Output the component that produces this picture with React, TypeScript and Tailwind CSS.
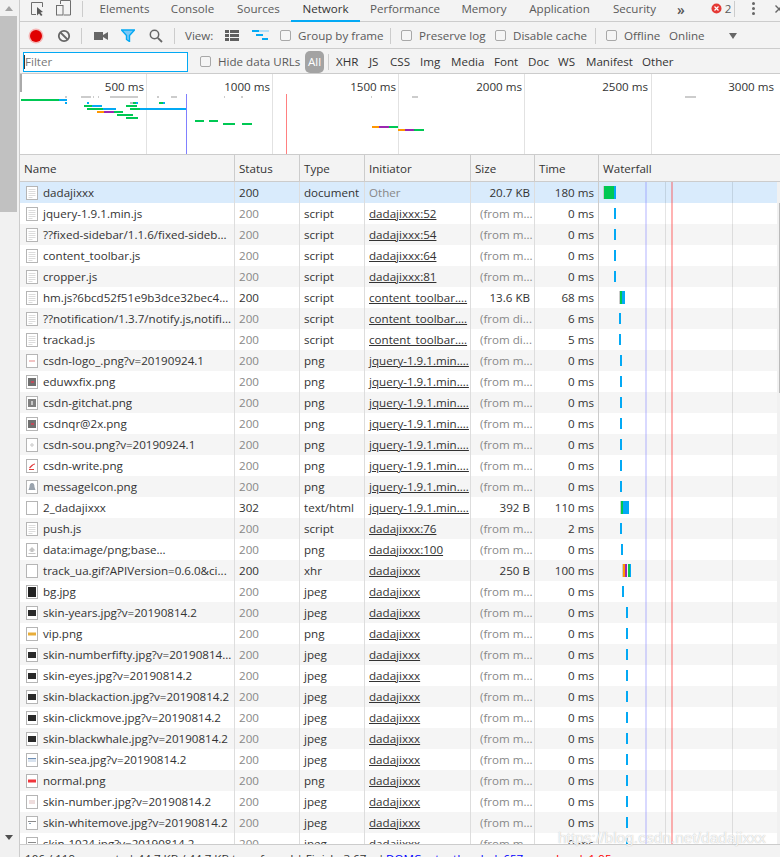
import React from "react";

type Seg = [number, number, string];
type Row = {
  name: string;
  status?: string;
  type: string;
  init: string;
  size?: string;
  time: string;
  icon: string;
  live?: boolean;
  bars: Seg[];
  tall?: boolean;
};

const BLUE = "#03a9f4";
const GREEN = "#00c853";
const JQ = "jquery-1.9.1.min....";
const CT = "content_toolbar....";
const CACHE = "(from m...";

const blue = (x: number): Seg[] => [[x, 2, BLUE]];

const rows: Row[] = [
  { name: "dadajixxx", type: "document", init: "Other", size: "20.7 KB", time: "180 ms", icon: "doc", live: true, tall: true, bars: [[603, 1, "#ccc"], [604, 9.5, GREEN], [613.5, 2.5, BLUE]] },
  { name: "jquery-1.9.1.min.js", type: "script", init: "dadajixxx:52", time: "0 ms", icon: "doc", bars: blue(614) },
  { name: "??fixed-sidebar/1.1.6/fixed-sideb...", type: "script", init: "dadajixxx:54", time: "0 ms", icon: "doc", bars: blue(614) },
  { name: "content_toolbar.js", type: "script", init: "dadajixxx:64", time: "0 ms", icon: "doc", bars: blue(614) },
  { name: "cropper.js", type: "script", init: "dadajixxx:81", time: "0 ms", icon: "doc", bars: blue(614) },
  { name: "hm.js?6bcd52f51e9b3dce32bec4...", type: "script", init: CT, size: "13.6 KB", time: "68 ms", icon: "doc", live: true, tall: true, bars: [[619, 1, "#ccc"], [620, 2, GREEN], [622, 3, BLUE]] },
  { name: "??notification/1.3.7/notify.js,notifi...", type: "script", init: CT, size: "(from di...", time: "6 ms", icon: "doc", bars: blue(619) },
  { name: "trackad.js", type: "script", init: CT, size: "(from di...", time: "5 ms", icon: "doc", bars: blue(619) },
  { name: "csdn-logo_.png?v=20190924.1", type: "png", init: JQ, time: "0 ms", icon: "logo", bars: blue(620) },
  { name: "eduwxfix.png", type: "png", init: JQ, time: "0 ms", icon: "qr", bars: blue(620) },
  { name: "csdn-gitchat.png", type: "png", init: JQ, time: "0 ms", icon: "qrg", bars: blue(620) },
  { name: "csdnqr@2x.png", type: "png", init: JQ, time: "0 ms", icon: "qr", bars: blue(620) },
  { name: "csdn-sou.png?v=20190924.1", type: "png", init: JQ, time: "0 ms", icon: "sou", bars: blue(620) },
  { name: "csdn-write.png", type: "png", init: JQ, time: "0 ms", icon: "write", bars: blue(620) },
  { name: "messageIcon.png", type: "png", init: JQ, time: "0 ms", icon: "bell", bars: blue(620) },
  { name: "2_dadajixxx", status: "302", type: "text/html", init: JQ, size: "392 B", time: "110 ms", icon: "blank", live: true, tall: true, bars: [[620, 1, "#ccc"], [621, 2, GREEN], [623, 6, BLUE]] },
  { name: "push.js", type: "script", init: "dadajixxx:76", time: "2 ms", icon: "doc", bars: blue(620) },
  { name: "data:image/png;base...", type: "png", init: "dadajixxx:100", time: "0 ms", icon: "up", bars: blue(621) },
  { name: "track_ua.gif?APIVersion=0.6.0&ci...", type: "xhr", init: "dadajixxx", size: "250 B", time: "100 ms", icon: "blank", live: true, tall: true, bars: [[622, 1, "#ccc"], [623, 2, "#ff9800"], [625, 2, "#9c27b0"], [628, 2, GREEN], [630, 1, BLUE]] },
  { name: "bg.jpg", type: "jpeg", init: "dadajixxx", time: "0 ms", icon: "dark", bars: blue(622) },
  { name: "skin-years.jpg?v=20190814.2", type: "jpeg", init: "dadajixxx", time: "0 ms", icon: "band", bars: blue(626) },
  { name: "vip.png", type: "png", init: "dadajixxx", time: "0 ms", icon: "vip", bars: blue(626) },
  { name: "skin-numberfifty.jpg?v=20190814...", type: "jpeg", init: "dadajixxx", time: "0 ms", icon: "band", bars: blue(626) },
  { name: "skin-eyes.jpg?v=20190814.2", type: "jpeg", init: "dadajixxx", time: "0 ms", icon: "band", bars: blue(626) },
  { name: "skin-blackaction.jpg?v=20190814.2", type: "jpeg", init: "dadajixxx", time: "0 ms", icon: "band", bars: blue(626) },
  { name: "skin-clickmove.jpg?v=20190814.2", type: "jpeg", init: "dadajixxx", time: "0 ms", icon: "band", bars: blue(626) },
  { name: "skin-blackwhale.jpg?v=20190814.2", type: "jpeg", init: "dadajixxx", time: "0 ms", icon: "band", bars: blue(626) },
  { name: "skin-sea.jpg?v=20190814.2", type: "jpeg", init: "dadajixxx", time: "0 ms", icon: "sea", bars: blue(626) },
  { name: "normal.png", type: "png", init: "dadajixxx", time: "0 ms", icon: "red", bars: blue(626) },
  { name: "skin-number.jpg?v=20190814.2", type: "jpeg", init: "dadajixxx", time: "0 ms", icon: "pale", bars: blue(626) },
  { name: "skin-whitemove.jpg?v=20190814.2", type: "jpeg", init: "dadajixxx", time: "0 ms", icon: "white", bars: blue(626) },
  { name: "skin-1024.jpg?v=20190814.2", type: "jpeg", init: "dadajixxx", time: "0 ms", icon: "white", bars: blue(626) },
];

function FileIcon({ kind }: { kind: string }) {
  return (
    <svg width="12" height="14" viewBox="0 0 12 14" className="shrink-0">
      <rect x="0.5" y="0.5" width="11" height="13" fill="#fff" stroke="#b5b5b5" />
      {kind === "doc" &&
        [3, 5, 7, 9, 11].map((y) => <rect key={y} x="2.5" y={y} width={y === 11 ? 4 : 7} height="1" fill="#dcdcdc" />)}
      {kind === "logo" && <rect x="3" y="6.5" width="6" height="1" fill="#e58a8a" />}
      {kind === "qr" && (
        <>
          <rect x="2" y="3" width="8" height="8" fill="#707070" />
          <rect x="5" y="6" width="3" height="2" fill="#c24a5a" />
        </>
      )}
      {kind === "qrg" && (
        <>
          <rect x="2" y="3" width="8" height="8" fill="#808080" />
          <rect x="5" y="5" width="2" height="4" fill="#c8c8c8" />
        </>
      )}
      {kind === "sou" && <circle cx="6" cy="7" r="1.2" fill="none" stroke="#c4c4c4" />}
      {kind === "write" && <path d="M3 10.5H8M3.5 9L6 6.5Q7.5 5 9 5" fill="none" stroke="#e23b3b" strokeWidth="1.2" />}
      {kind === "bell" && <path d="M6 3 Q8.5 3 8.5 7 L9.5 10 L2.5 10 L3.5 7 Q3.5 3 6 3 Z" fill="#9aa3ad" />}
      {kind === "up" && <path d="M6 4 L9.5 7.5 L7.5 7.5 L7.5 9 L4.5 9 L4.5 7.5 L2.5 7.5 Z M2.5 10 H9.5 V11 H2.5 Z" fill="#c4c4c4" />}
      {kind === "dark" && <rect x="2" y="2" width="8" height="10" fill="#222" />}
      {kind === "band" && <rect x="2" y="4" width="8" height="6" fill="#2a2a2a" />}
      {kind === "vip" && <rect x="2" y="5.5" width="8" height="3" fill="#e8ad3a" />}
      {kind === "sea" && (
        <>
          <rect x="2" y="5" width="8" height="1" fill="#6f8fb5" />
          <rect x="2" y="6" width="8" height="3" fill="#d8e2ee" />
        </>
      )}
      {kind === "red" && <rect x="2" y="5.5" width="8" height="3" fill="#f0353b" />}
      {kind === "pale" && <rect x="3" y="5" width="6" height="4" fill="#eedddd" />}
      {kind === "white" && (
        <>
          <rect x="2" y="5" width="8" height="1" fill="#8a8a8a" />
          <rect x="3" y="7" width="2" height="1" fill="#8aa0b5" />
        </>
      )}
    </svg>
  );
}

function Check({ label, w, low }: { label: string; w: string; low?: boolean }) {
  return (
    <div className={`flex items-center ${w}`}>
      <span className="w-[11px] h-[11px] rounded-[2px] border border-[#a8a8a8] bg-[#f5f5f5] shrink-0" />
      <span className={`ml-[7px] text-[#5a5a5a] whitespace-nowrap ${low ? "pt-px" : ""}`}>{label}</span>
    </div>
  );
}

const tabs: [string, string][] = [
  ["Elements", "w-[69px]"],
  ["Console", "w-[67px]"],
  ["Sources", "w-[65px]"],
  ["Network", "w-[69px]"],
  ["Performance", "w-[90px]"],
  ["Memory", "w-[68px]"],
  ["Application", "w-[83px]"],
  ["Security", "w-[67px]"],
];

const types: [string, string][] = [
  ["XHR", "w-[33px]"],
  ["JS", "w-[21px]"],
  ["CSS", "w-[30px]"],
  ["Img", "w-[31px]"],
  ["Media", "w-[43px]"],
  ["Font", "w-[34px]"],
  ["Doc", "w-[30px]"],
  ["WS", "w-[28px]"],
  ["Manifest", "w-[56px]"],
  ["Other", "w-[40px]"],
];

function Overview() {
  const bars: [number, number, number, string][] = [
    [21, 99, 38, GREEN], [59, 99, 8, BLUE], [65, 102, 2, BLUE],
    [65, 96, 2, "#ccc"], [81, 96, 10, "#ccc"], [93, 96, 1, "#ccc"], [98, 96, 1, "#ccc"], [110, 96, 28, "#ccc"],
    [157, 96, 2, "#ccc"], [171, 96, 6, "#ccc"], [224, 96, 1, "#ccc"], [241, 96, 2, "#ccc"], [371, 96, 1, "#ccc"],
    [412, 96, 6, "#ccc"], [685, 96, 11, "#ccc"],
    [87, 102, 2, BLUE], [130, 102, 3, "#bbb"], [133, 102, 3, GREEN], [136, 102, 2, BLUE], [159, 102, 4, GREEN], [163, 102, 2, BLUE],
    [84, 105, 8, GREEN], [92, 105, 10, BLUE], [126, 105, 11, GREEN],
    [87, 108, 16, GREEN], [103, 108, 13, BLUE], [130, 108, 10, GREEN], [140, 108, 46, BLUE],
    [97, 111, 7, "#ff9800"], [104, 111, 10, "#9c27b0"], [114, 111, 9, GREEN],
    [117, 114, 16, GREEN], [126, 117, 12, GREEN],
    [195, 120, 9, GREEN], [209, 120, 9, GREEN], [223, 123, 12, GREEN], [242, 123, 10, GREEN],
    [372, 126, 7, "#ff9800"], [379, 126, 10, "#9c27b0"], [389, 126, 9, GREEN],
    [398, 129, 7, "#ff9800"], [405, 129, 9, "#9c27b0"], [414, 129, 10, GREEN],
  ];
  return (
    <svg width="760" height="80" viewBox="20 74 760 80" className="absolute left-0 top-0">
      {[146.5, 272.5, 398.5, 524.5, 651.5].map((x) => (
        <line key={x} x1={x} x2={x} y1="74" y2="154" stroke="#e2e2e2" />
      ))}
      <rect x="20" y="74" width="2" height="18" fill="#aaa" />
      <line x1="186.5" x2="186.5" y1="94" y2="154" stroke="#8080ff" />
      <line x1="286.5" x2="286.5" y1="94" y2="154" stroke="#ff8080" />
      {bars.map(([x, y, w, c], i) => (
        <rect key={i} x={x} y={y} width={w} height="2" fill={c} />
      ))}
    </svg>
  );
}

export default function App() {
  return (
    <div className="w-[780px] h-[857px] overflow-hidden flex bg-[#f3f3f3] text-[11.6px] text-[#333] relative font-['Open_Sans','Noto_Sans',sans-serif]">
      {/* page scrollbar */}
      <div className="w-[19px] shrink-0 flex flex-col bg-[#f1f1f1] pr-[2px]">
        <div className="h-[16px] flex items-center justify-center">
          <span className="w-0 h-0 border-x-[4.5px] border-x-transparent border-b-[5px] border-b-[#a3a3a3]" />
        </div>
        <div className="h-[196px] bg-[#c1c1c1]" />
        <div className="flex-1" />
        <div className="h-[24px] flex justify-center">
          <span className="w-0 h-0 mt-[2px] border-x-[4.5px] border-x-transparent border-t-[5px] border-t-[#505050]" />
        </div>
      </div>

      <div className="w-[761px] flex flex-col border-l border-[#ccc] relative">
        {/* tabs */}
        <div className="h-[22px] shrink-0 flex items-start border-b border-[#ccc] relative">
          <div className="w-[62px] h-[21px] flex items-start shrink-0 pl-[10px]">
            <svg width="15" height="16" viewBox="0 0 15 16" fill="none" className="mt-[1px]">
              <path d="M6 13.5H1.5V1.5H12.5V6" stroke="#6e6e6e" strokeWidth="1" />
              <path d="M7 6L7 14.5L9 12.5L11 15L12.5 14L10.5 11.5L13 11Z" fill="#5a5a5a" />
            </svg>
            <svg width="16" height="16" viewBox="0 0 16 16" fill="none" className="ml-[11px]">
              <path d="M4.5 4V0.5H14.5V15H8" stroke="#6e6e6e" />
              <rect x="0.5" y="5.5" width="6.5" height="9.5" stroke="#6e6e6e" />
            </svg>
          </div>
          <div className="w-px h-[16px] mt-px bg-[#ccc] shrink-0" />
          <div className="flex ml-[7px] text-[#5a5a5a]">
            {tabs.map(([t, w]) => (
              <div
                key={t}
                className={`${w} flex items-start justify-center whitespace-nowrap ${t === "Network" ? "border-b-2 border-[#03a9f4] text-[#333] h-[22px]" : "h-[21px]"}`}
              >
                {t}
              </div>
            ))}
          </div>
          <span className="ml-[9px] w-[8px] mt-[-1px] text-[14px] text-[#555] font-semibold">»</span>
          <svg width="11" height="11" viewBox="0 0 11 11" className="ml-[26px] mt-[3px] shrink-0">
            <circle cx="5.5" cy="5.5" r="5" fill="#e53935" />
            <path d="M3.5 3.5L7.5 7.5M7.5 3.5L3.5 7.5" stroke="#fff" strokeWidth="1.2" />
          </svg>
          <span className="ml-[3px] w-[7px] text-[#5a5a5a]">2</span>
          <div className="w-px h-[16px] mt-px ml-[3px] bg-[#ccc] shrink-0" />
          <div className="ml-[17px] mt-[2px] flex flex-col gap-[2px] shrink-0">
            <span className="w-[3px] h-[3px] bg-[#666] rounded-full" />
            <span className="w-[3px] h-[3px] bg-[#666] rounded-full" />
            <span className="w-[3px] h-[3px] bg-[#666] rounded-full" />
          </div>
          <svg width="8" height="8" viewBox="0 0 8 8" className="ml-[20px] mt-[5px] shrink-0">
            <path d="M0.5 0.5L7.5 7.5M7.5 0.5L0.5 7.5" stroke="#666" strokeWidth="1.4" />
          </svg>
        </div>

        {/* network toolbar */}
        <div className="h-[27px] shrink-0 flex items-center border-b border-[#ccc] pt-px text-[#5a5a5a]">
          <div className="ml-[10px] w-[12px] h-[12px] rounded-full bg-[#e00000] shadow-[0_0_0_1.5px_#f5b5b5] shrink-0" />
          <svg width="14" height="14" viewBox="0 0 14 14" fill="none" className="ml-[15px] shrink-0">
            <circle cx="7" cy="7" r="5.2" stroke="#666" strokeWidth="1.8" />
            <path d="M3.5 3.5L10.5 10.5" stroke="#666" strokeWidth="1.8" />
          </svg>
          <div className="w-px h-[16px] ml-[10px] bg-[#ccc] shrink-0" />
          <svg width="14" height="10" viewBox="0 0 14 10" className="ml-[12px] shrink-0">
            <rect x="0" y="1" width="9" height="8" fill="#666" />
            <path d="M9 4L14 1V9L9 6Z" fill="#666" />
          </svg>
          <svg width="14" height="13" viewBox="0 0 14 13" className="ml-[13px] shrink-0">
            <path d="M0.5 1H13.5L8.5 6.5V12.5L5.5 10.5V6.5Z" fill="#7cc8f5" stroke="#03a9f4" strokeWidth="1.4" />
          </svg>
          <svg width="14" height="14" viewBox="0 0 14 14" fill="none" className="ml-[14px] shrink-0">
            <circle cx="5.5" cy="5.5" r="4.2" stroke="#666" strokeWidth="1.5" />
            <path d="M8.8 8.8L13 13" stroke="#666" strokeWidth="1.8" />
          </svg>
          <div className="w-px h-[16px] ml-[11px] bg-[#ccc] shrink-0" />
          <span className="ml-[10px] w-[40px] shrink-0">View:</span>
          <svg width="14" height="11" viewBox="0 0 14 11" className="shrink-0">
            <path d="M0 0H4V3H0ZM5 0H14V3H5ZM0 4H4V7H0ZM5 4H14V7H5ZM0 8H4V11H0ZM5 8H14V11H5Z" fill="#5f5f5f" />
          </svg>
          <svg width="17" height="11" viewBox="0 0 17 11" className="ml-[13px] shrink-0">
            <rect x="0" y="0" width="7" height="2" fill="#03a9f4" />
            <rect x="7" y="0" width="10" height="2" fill="#b3dff7" />
            <rect x="4" y="4" width="7" height="2" fill="#03a9f4" />
            <rect x="10" y="8" width="6" height="2" fill="#03a9f4" />
          </svg>
          <div className="ml-[11px]">
            <Check label="Group by frame" w="w-[110px]" />
          </div>
          <div className="w-px h-[16px] bg-[#ccc] shrink-0" />
          <div className="ml-[10px]">
            <Check label="Preserve log" w="w-[94px]" />
          </div>
          <Check label="Disable cache" w="w-[100px]" />
          <div className="w-px h-[16px] bg-[#ccc] shrink-0" />
          <div className="ml-[10px]">
            <Check label="Offline" w="w-[63px]" />
          </div>
          <span className="w-[34px]">Online</span>
          <span className="ml-[26px] w-0 h-0 border-x-[4px] border-x-transparent border-t-[6px] border-t-[#666]" />
        </div>

        {/* filter bar */}
        <div className="h-[25px] shrink-0 flex items-center border-b border-[#ccc] pt-px">
          <div className="ml-[3px] w-[165px] h-[20px] border border-[#03a9f4] bg-white flex items-center shrink-0">
            <span className="w-px h-[14px] bg-[#333]" />
            <span className="text-[#777] pt-px">Filter</span>
          </div>
          <div className="ml-[12px]">
            <Check label="Hide data URLs" w="w-[105px]" low />
          </div>
          <div className="w-[19px] h-[22px] rounded-[5px] bg-[#a3a3a3] text-white flex items-center justify-center shrink-0">
            All
          </div>
          <div className="w-px h-[16px] ml-[4px] bg-[#ccc] shrink-0" />
          <div className="flex ml-[7px] pt-px text-[#333]">
            {types.map(([t, w]) => (
              <span key={t} className={`${w} whitespace-nowrap`}>
                {t}
              </span>
            ))}
          </div>
        </div>

        {/* overview */}
        <div className="h-[81px] shrink-0 bg-white border-b border-[#ccc] relative">
          <Overview />
          <div className="flex h-[24px] relative">
            {["500 ms", "1000 ms", "1500 ms", "2000 ms", "2500 ms", "3000 ms"].map((t) => (
              <div key={t} className="w-[126px] pr-[2px] pt-[4px] text-right text-[#333] whitespace-nowrap">
                {t}
              </div>
            ))}
          </div>
        </div>

        {/* table */}
        <div className="flex-1 flex flex-col min-h-0 relative">
          <div className="h-[27px] shrink-0 flex items-center border-b border-[#ccc] bg-[#f3f3f3] text-[#333]">
            <div className="w-[215px] h-full flex items-center pl-[4px] pt-px border-r border-[#ccc]">Name</div>
            <div className="w-[65px] h-full flex items-center pl-[4px] pt-px border-r border-[#ccc]">Status</div>
            <div className="w-[65px] h-full flex items-center pl-[4px] pt-px border-r border-[#ccc]">Type</div>
            <div className="w-[106px] h-full flex items-center pl-[4px] pt-px border-r border-[#ccc]">Initiator</div>
            <div className="w-[64px] h-full flex items-center pl-[4px] pt-px border-r border-[#ccc]">Size</div>
            <div className="w-[64px] h-full flex items-center pl-[4px] pt-px border-r border-[#ccc]">Time</div>
            <div className="flex-1 h-full flex items-center pl-[4px] pt-px">Waterfall</div>
          </div>

          <div className="flex-1 min-h-0 overflow-hidden relative">
            {rows.map((r, i) => (
              <div
                key={r.name}
                className={`h-[21px] w-[757px] flex items-center relative whitespace-nowrap ${i === 0 ? "bg-[#d9ebfc]" : i % 2 === 1 ? "bg-white" : "bg-[#f5f5f5]"}`}
              >
                <div className="w-[215px] h-full flex items-center pl-[6px] border-r border-[#ddd] overflow-hidden">
                  <FileIcon kind={r.icon} />
                  <span className="ml-[5px] text-[#333]">{r.name}</span>
                </div>
                <div className={`w-[65px] h-full flex items-center pl-[4px] border-r border-[#ddd] ${r.live ? "text-[#333]" : "text-[#888]"}`}>
                  {r.status ?? "200"}
                </div>
                <div className="w-[65px] h-full flex items-center pl-[4px] border-r border-[#ddd] text-[#333]">{r.type}</div>
                <div className="w-[106px] h-full flex items-center pl-[4px] border-r border-[#ddd] overflow-hidden">
                  <span className={r.init === "Other" ? "text-[#888]" : "underline text-[#333]"}>{r.init}</span>
                </div>
                <div className={`w-[64px] h-full flex items-center pr-[4px] border-r border-[#ddd] ${r.live ? "justify-end text-[#333]" : "justify-start pl-[9px] text-[#888]"}`}>
                  {r.size ?? CACHE}
                </div>
                <div className="w-[64px] h-full flex items-center justify-end pr-[4px] border-r border-[#ccc] text-[#333]">{r.time}</div>
                {r.bars.map(([x, w, c], b) => (
                  <span
                    key={b}
                    className={`absolute ${r.tall ? "top-[4px] h-[13px]" : "top-[5px] h-[11px]"}`}
                    style={{ left: x - 20, width: w, backgroundColor: c }}
                  />
                ))}
              </div>
            ))}
            {/* waterfall event lines */}
            <span className="absolute top-0 bottom-0 left-[625px] w-[2px] bg-[#8080ff]/30" />
            <span className="absolute top-0 bottom-0 left-[645px] w-px bg-black/10" />
            <span className="absolute top-0 bottom-0 left-[651px] w-[2px] bg-[#ff4040]/40" />
            <span className="absolute top-0 bottom-0 left-[712px] w-px bg-black/10" />
            {/* right scrollbar */}
            <div className="absolute top-0 bottom-0 right-0 w-[3px] bg-[#f1f1f1]">
              <div className="absolute right-0 top-[21px] h-[190px] w-[1px] bg-[#bbb]" />
            </div>
          </div>
        </div>

        {/* status bar */}
        <div className="h-[13px] shrink-0 overflow-hidden border-t border-[#ccc] bg-[#f3f3f3] pl-[5px] pt-[6px] leading-[16px] whitespace-nowrap text-[#333]">
          <span className="inline-block w-[361px]">106 / 119 requests | 44.7 KB / 44.7 KB transferred | Finish: 3.67 s |</span>
          <span className="inline-block w-[170px] text-[#0000ff]">DOMContentLoaded: 657 ms</span>
          <span className="text-[#ff0000]">Load: 1.95 s</span>
        </div>
      </div>

      {/* image watermark */}
      <div className="absolute left-[558px] top-[829px] text-[15.5px] leading-[18px] text-white/85 whitespace-nowrap font-['Liberation_Sans',sans-serif] [text-shadow:0_0_1px_rgba(150,150,150,0.8)]">
        https://blog.csdn.net/dadajixxx
      </div>
    </div>
  );
}
